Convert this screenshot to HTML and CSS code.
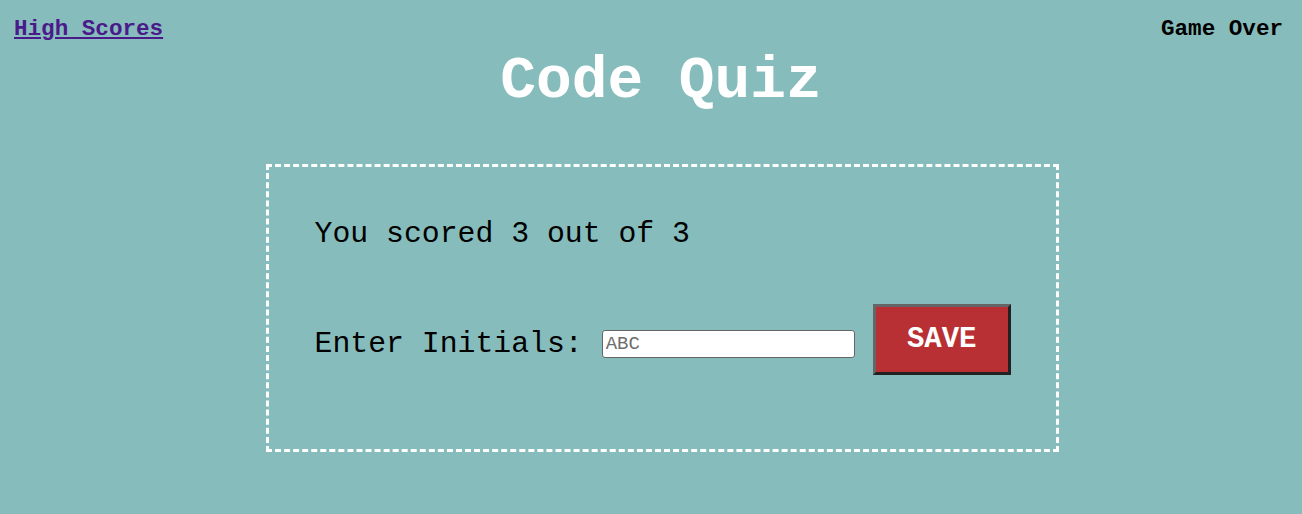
FILE: index.html
```html
<!DOCTYPE html>
<html lang="en">
<head>
  <meta charset="UTF-8" />
  <meta name="viewport" content="width=device-width, initial-scale=1.0"/>
  <title>Code Quiz</title>
  <link rel="stylesheet" href="styles.css">
</head>
<body>
  <nav>
    <a href="#" class="scores-link">High Scores</a>
    <div class="timer">Game Over</div>
  </nav>

  <header>
    <h1>Code Quiz</h1>
  </header>

  <main>
    <div class="card" id="end-screen">
      <p class="result">You scored 3 out of 3</p>
      <form class="save-form">
        <label for="initials">Enter Initials:</label>
        <input type="text" id="initials" placeholder="ABC" />
        <button type="button">SAVE</button>
      </form>
    </div>
  </main>
</body>
</html>
```

FILE: styles.css
```css
body {
  margin: 0;
  font-family: 'Liberation Mono', 'Courier New', monospace;
  background-color: #87bcbc;
  color: #000;
}

nav {
  display: flex;
  justify-content: space-between;
  align-items: center;
  padding: 16px 19px 0 14px;
  font-size: 22.6px;
  font-weight: bold;
}

.scores-link {
  color: #4b1a8a;
}

header {
  text-align: center;
  padding-left: 20px;
  margin-top: 5px;
}

h1 {
  margin: 0;
  font-size: 59.5px;
  color: #fff;
}

main {
  padding-left: 22px;
  display: flex;
  justify-content: center;
}

.card {
  width: 793px;
  height: 288px;
  margin-top: 49px;
  border: 3px dashed #fff;
  padding: 0 0 0 46px;
  box-sizing: border-box;
}

.result {
  margin: 50px 0 0;
  font-size: 29.8px;
}

.save-form {
  display: flex;
  align-items: center;
  margin-top: 53px;
  font-size: 29.8px;
}

.save-form label {
  margin-right: 19px;
}

.save-form input {
  width: 253px;
  height: 28px;
  box-sizing: border-box;
  border: 1px solid #666;
  border-radius: 3px;
  padding: 0 3px;
  font-family: 'Liberation Mono', 'Courier New', monospace;
  font-size: 19px;
}

.save-form input::placeholder {
  color: #6e6e6e;
}

.save-form button {
  margin: 0 0 8px 18px;
  width: 138px;
  height: 71px;
  background: #b83034;
  color: #fff;
  font-family: inherit;
  font-size: 29px;
  font-weight: bold;
  border: 3px solid;
  border-color: #666 #222 #222 #666;
  cursor: pointer;
}
```
